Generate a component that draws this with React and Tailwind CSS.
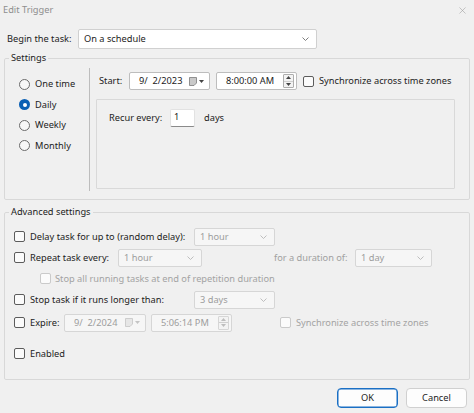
import React from 'react';
import { X } from 'lucide-react';

function Checkbox({ disabled }) {
  return (
    <span
      className={`block h-[11px] w-[11px] shrink-0 rounded-[2px] border bg-[#fbfbfb] ${
        disabled ? 'border-[#cacaca]' : 'border-[#5c5c5c]'
      }`}
    />
  );
}

function Radio({ checked }) {
  if (checked) {
    return (
      <span className="flex h-[11px] w-[11px] shrink-0 items-center justify-center rounded-full bg-[#0a5fb4]">
        <span className="h-[4px] w-[4px] rounded-full bg-white" />
      </span>
    );
  }
  return <span className="block h-[11px] w-[11px] shrink-0 rounded-full border border-[#6b6b6b] bg-[#f7f7f7]" />;
}

function Chevron({ color }) {
  return (
    <svg width="7" height="4" viewBox="0 0 7 4">
      <path d="M0.5 0.5 L3.5 3.5 L6.5 0.5" fill="none" stroke={color} strokeWidth="0.9" />
    </svg>
  );
}

function Select({ value, className, disabled }) {
  return (
    <div
      className={`flex items-center justify-between rounded-[2px] border pl-[5px] pr-[7px] ${
        disabled ? 'border-[#d6d6d6] bg-[#f6f6f6] text-[#9d9d9d]' : 'border-[#d0d0d0] bg-white'
      } ${className}`}
    >
      <span>{value}</span>
      <Chevron color={disabled ? '#b8b8b8' : '#707070'} />
    </div>
  );
}

// date picker with the little calendar page + drop arrow
function DateBox({ value, disabled, className }) {
  const ink = disabled ? '#c4c4c4' : '#7a7a7a';
  return (
    <div
      className={`flex items-center justify-between rounded-[2px] border pl-[9px] pr-[5px] ${
        disabled ? 'border-[#d6d6d6] bg-[#f6f6f6] text-[#9d9d9d]' : 'border-[#bdbdbd] bg-white'
      } ${className}`}
    >
      <span className="whitespace-pre">{value}</span>
      <span className="flex items-center gap-[2px]">
        <svg width="8" height="9" viewBox="0 0 8 9">
          <path d="M0.5 0.5 H7.5 V6 L5 8.5 H0.5 Z" fill={disabled ? '#e6e6e6' : '#c9c9c9'} stroke={ink} strokeWidth="0.8" />
        </svg>
        <svg width="5" height="3" viewBox="0 0 5 3">
          <path d="M0 0 H5 L2.5 3 Z" fill={disabled ? '#c4c4c4' : '#444'} />
        </svg>
      </span>
    </div>
  );
}

function TimeBox({ value, disabled, className }) {
  const ink = disabled ? '#bdbdbd' : '#444';
  return (
    <div
      className={`flex items-center justify-between rounded-[2px] border pl-[9px] pr-[2px] ${
        disabled ? 'border-[#d6d6d6] bg-[#f6f6f6] text-[#9d9d9d]' : 'border-[#bdbdbd] bg-white'
      } ${className}`}
    >
      <span>{value}</span>
      <span
        className={`flex h-[14px] w-[11px] flex-col rounded-[1px] border ${
          disabled ? 'border-[#d6d6d6]' : 'border-[#adadad]'
        } bg-[#f3f3f3]`}
      >
        <span className="flex flex-1 items-center justify-center border-b border-[#cfcfcf]">
          <svg width="5" height="3" viewBox="0 0 5 3">
            <path d="M0 3 H5 L2.5 0 Z" fill={ink} />
          </svg>
        </span>
        <span className="flex flex-1 items-center justify-center">
          <svg width="5" height="3" viewBox="0 0 5 3">
            <path d="M0 0 H5 L2.5 3 Z" fill={ink} />
          </svg>
        </span>
      </span>
    </div>
  );
}

export default function App() {
  return (
    <div className="flex h-[413px] w-[474px] flex-col overflow-hidden bg-[#f0f0f0] font-['Noto_Sans',sans-serif] text-[9.25px] leading-[12px] text-[#1c1c1c]">
      {/* title bar */}
      <div className="flex h-[20px] shrink-0 items-center justify-between pl-[3px] pr-[6px]">
        <span className="text-[#8e8e8e]">Edit Trigger</span>
        <X size={11} strokeWidth={1.2} color="#9a9a9a" />
      </div>

      <div className="mt-[9px] flex items-center pl-[7px]">
        <span className="w-[71px]">Begin the task:</span>
        <Select value="On a schedule" className="h-[20px] w-[239px]" />
      </div>

      {/* Settings */}
      <fieldset className="mx-[4px] mt-[3px] rounded-[2px] border border-[#d8d8d8]">
        <legend className="ml-[4px] px-[2px]">Settings</legend>
        <div className="flex h-[135px]">
          <div className="flex w-[84px] flex-col pl-[14px] pt-[10px]">
            {[
              ['One time', false],
              ['Daily', true],
              ['Weekly', false],
              ['Monthly', false],
            ].map(([label, on]) => (
              <div key={label} className="flex h-[20.5px] items-center gap-[5px]">
                <Radio checked={on} />
                <span>{label}</span>
              </div>
            ))}
          </div>
          <div className="mb-[8px] mt-[4px] w-px bg-[#bdbdbd]" />
          <div className="flex flex-col pl-[6px] pt-[8px]">
            <div className="flex h-[18px] items-center">
              <span className="w-[33px] pl-[3px]">Start:</span>
              <DateBox value="9/  2/2023" className="h-[18px] w-[81px]" />
              <TimeBox value="8:00:00 AM" className="ml-[6px] h-[18px] w-[81px]" />
              <span className="ml-[6px]">
                <Checkbox />
              </span>
              <span className="ml-[5px]">Synchronize across time zones</span>
            </div>
            <div className="mt-[9px] h-[90px] w-[359px] rounded-[1px] border border-[#d9d9d9] pl-[12px] pt-[9px]">
              <div className="flex h-[18px] items-center">
                <span className="w-[61px]">Recur every:</span>
                <div className="h-[18px] w-[25px] rounded-[2px] border border-[#e2e2e2] border-b-[#8a8a8a] bg-white pl-[3px] leading-[14px]">
                  1
                </div>
                <span className="ml-[9px]">days</span>
              </div>
            </div>
          </div>
        </div>
      </fieldset>

      {/* Advanced settings */}
      <fieldset className="mx-[4px] mt-[6px] rounded-[2px] border border-[#d8d8d8] pb-[15px]">
        <legend className="ml-[4px] px-[2px]">Advanced settings</legend>
        <div className="flex flex-col pl-[9px] pt-[8px]">
          <div className="flex h-[21px] items-center">
            <Checkbox />
            <span className="ml-[5px] w-[164px]">Delay task for up to (random delay):</span>
            <Select value="1 hour" disabled className="h-[18px] w-[81px]" />
          </div>
          <div className="flex h-[21px] items-center">
            <Checkbox />
            <span className="ml-[5px] w-[88px]">Repeat task every:</span>
            <Select value="1 hour" disabled className="h-[18px] w-[84px]" />
            <span className="ml-[72px] w-[81px] text-[#a0a0a0]">for a duration of:</span>
            <Select value="1 day" disabled className="h-[18px] w-[77px]" />
          </div>
          <div className="flex h-[21px] items-center pl-[26px]">
            <Checkbox disabled />
            <span className="ml-[4px] text-[#a3a3a3]">Stop all running tasks at end of repetition duration</span>
          </div>
          <div className="flex h-[21px] items-center">
            <Checkbox />
            <span className="ml-[5px] w-[164px]">Stop task if it runs longer than:</span>
            <Select value="3 days" disabled className="h-[18px] w-[81px]" />
          </div>
          <div className="mt-[2px] flex h-[21px] items-center">
            <Checkbox />
            <span className="ml-[5px] w-[34px]">Expire:</span>
            <DateBox value="9/  2/2024" disabled className="h-[18px] w-[82px]" />
            <TimeBox value="5:06:14 PM" disabled className="ml-[5px] h-[18px] w-[81px]" />
            <span className="ml-[48px]">
              <Checkbox disabled />
            </span>
            <span className="ml-[5px] text-[#a3a3a3]">Synchronize across time zones</span>
          </div>
          <div className="mt-[10px] flex h-[21px] items-center">
            <Checkbox />
            <span className="ml-[5px]">Enabled</span>
          </div>
        </div>
      </fieldset>

      <div className="mt-[8px] flex justify-end gap-[8px] pr-[7px]">
        <button className="h-[20px] w-[61px] rounded-[4px] border border-[#1a6fc4] bg-[#fdfdfd] shadow-[inset_0_0_0_0.5px_#1a6fc4]">
          OK
        </button>
        <button className="h-[20px] w-[61px] rounded-[4px] border border-[#d0d0d0] bg-[#fdfdfd]">Cancel</button>
      </div>
    </div>
  );
}
